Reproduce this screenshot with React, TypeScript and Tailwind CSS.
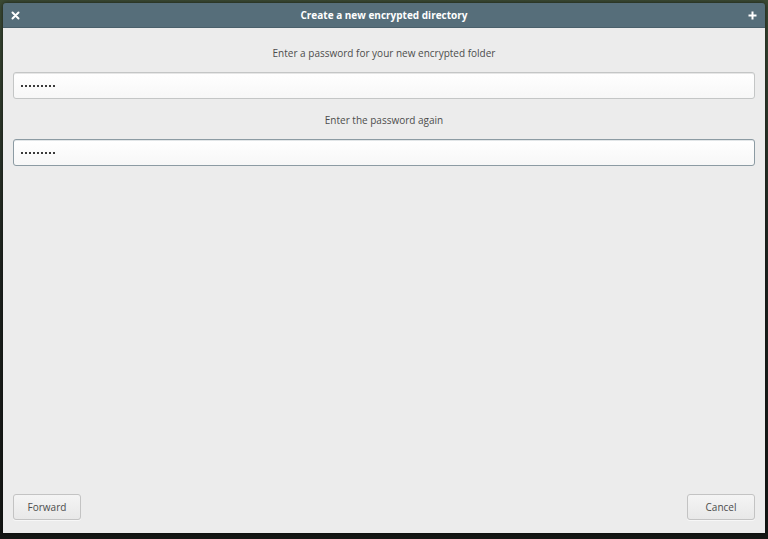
import React from 'react';

const font = { fontFamily: '"Open Sans", "Noto Sans", sans-serif' };

const PasswordField = ({ focused }: { focused?: boolean }) => (
  <div
    className={`h-[27px] rounded-[3px] border bg-gradient-to-b from-white to-[#f7f7f7] flex items-center gap-[2px] px-[7px] ${
      focused ? 'border-[#8c9ba3] shadow-[inset_0_1px_0_#e2e6e8]' : 'border-[#c4c6c6] shadow-[inset_0_1px_0_#e6e6e6]'
    }`}
  >
    {Array.from({ length: 9 }).map((_, i) => (
      <span key={i} className="w-[2px] h-[2px] bg-[#3a3a3a]" />
    ))}
  </div>
);

const App = () => {
  return (
    <div
      className="w-[768px] h-[539px] bg-gradient-to-b from-[#3b4a34] via-[#1f2420] to-[#151715] pt-[3px] pl-[3px] pr-[3px] pb-[6px] flex"
      style={font}
    >
      <div className="flex-1 flex flex-col rounded-t-[3px] overflow-hidden shadow-[0_0_4px_rgba(0,0,0,0.6)]">
        {/* Title bar */}
        <div className="h-[25px] bg-[#566e7a] border-b border-[#4a606b] flex items-center px-[8px] shrink-0">
          <svg width="9" height="9" viewBox="0 0 9 9" className="shrink-0">
            <path d="M1.5 1.5 L7.5 7.5 M7.5 1.5 L1.5 7.5" stroke="white" strokeWidth="2" strokeLinecap="round" />
          </svg>
          <div className="flex-1 text-center text-white text-[10px] font-bold">Create a new encrypted directory</div>
          <svg width="9" height="9" viewBox="0 0 9 9" className="shrink-0">
            <path d="M4.5 0.5 V8.5 M0.5 4.5 H8.5" stroke="white" strokeWidth="2" />
          </svg>
        </div>

        {/* Body */}
        <div className="flex-1 bg-[#ececec] flex flex-col px-[10px] pb-[13px]">
          <div className="text-center text-[10px] text-[#4c4c4c] pt-[18px] pb-[11px]">
            Enter a password for your new encrypted folder
          </div>
          <PasswordField />
          <div className="text-center text-[10px] text-[#4c4c4c] pt-[14px] pb-[11px]">Enter the password again</div>
          <PasswordField focused />

          <div className="flex-1" />

          <div className="flex justify-between">
            <button className="w-[68px] h-[26px] rounded-[3px] border border-[#c3c3c3] bg-gradient-to-b from-[#f4f4f4] to-[#e8e8e8] text-[10px] text-[#4c4c4c] shadow-[0_1px_0_rgba(255,255,255,0.6)]">
              Forward
            </button>
            <button className="w-[68px] h-[26px] rounded-[3px] border border-[#c3c3c3] bg-gradient-to-b from-[#f4f4f4] to-[#e8e8e8] text-[10px] text-[#4c4c4c] shadow-[0_1px_0_rgba(255,255,255,0.6)]">
              Cancel
            </button>
          </div>
        </div>
      </div>
    </div>
  );
};

export default App;
